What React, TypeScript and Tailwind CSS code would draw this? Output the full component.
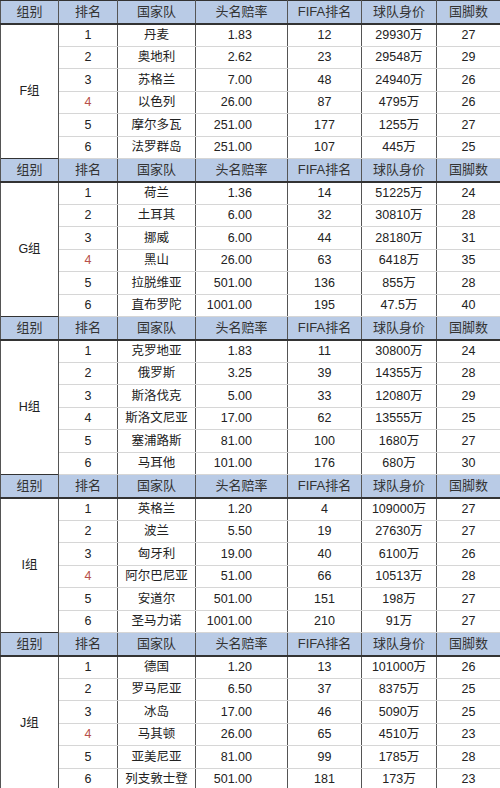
import React from "react";

type Row = [string, string, string, string, string, string];

const GROUPS: { name: string; redFour: boolean; rows: Row[] }[] = [
  {
    name: "F组",
    redFour: true,
    rows: [
      ["1", "丹麦", "1.83", "12", "29930万", "27"],
      ["2", "奥地利", "2.62", "23", "29548万", "29"],
      ["3", "苏格兰", "7.00", "48", "24940万", "26"],
      ["4", "以色列", "26.00", "87", "4795万", "26"],
      ["5", "摩尔多瓦", "251.00", "177", "1255万", "27"],
      ["6", "法罗群岛", "251.00", "107", "445万", "25"],
    ],
  },
  {
    name: "G组",
    redFour: true,
    rows: [
      ["1", "荷兰", "1.36", "14", "51225万", "24"],
      ["2", "土耳其", "6.00", "32", "30810万", "28"],
      ["3", "挪威", "6.00", "44", "28180万", "31"],
      ["4", "黑山", "26.00", "63", "6418万", "35"],
      ["5", "拉脱维亚", "501.00", "136", "855万", "28"],
      ["6", "直布罗陀", "1001.00", "195", "47.5万", "40"],
    ],
  },
  {
    name: "H组",
    redFour: false,
    rows: [
      ["1", "克罗地亚", "1.83", "11", "30800万", "24"],
      ["2", "俄罗斯", "3.25", "39", "14355万", "28"],
      ["3", "斯洛伐克", "5.00", "33", "12080万", "29"],
      ["4", "斯洛文尼亚", "17.00", "62", "13555万", "25"],
      ["5", "塞浦路斯", "81.00", "100", "1680万", "27"],
      ["6", "马耳他", "101.00", "176", "680万", "30"],
    ],
  },
  {
    name: "I组",
    redFour: true,
    rows: [
      ["1", "英格兰", "1.20", "4", "109000万", "27"],
      ["2", "波兰", "5.50", "19", "27630万", "27"],
      ["3", "匈牙利", "19.00", "40", "6100万", "26"],
      ["4", "阿尔巴尼亚", "51.00", "66", "10513万", "28"],
      ["5", "安道尔", "501.00", "151", "198万", "27"],
      ["6", "圣马力诺", "1001.00", "210", "91万", "27"],
    ],
  },
  {
    name: "J组",
    redFour: true,
    rows: [
      ["1", "德国", "1.20", "13", "101000万", "26"],
      ["2", "罗马尼亚", "6.50", "37", "8375万", "25"],
      ["3", "冰岛", "17.00", "46", "5090万", "25"],
      ["4", "马其顿", "26.00", "65", "4510万", "23"],
      ["5", "亚美尼亚", "81.00", "99", "1785万", "28"],
      ["6", "列支敦士登", "501.00", "181", "173万", "23"],
    ],
  },
];

const HEADERS = ["组别", "排名", "国家队", "头名赔率", "FIFA排名", "球队身价", "国脚数"];
const WIDTHS = [58, 59, 78, 92, 74, 75, 64];

const cell =
  "border-x border-x-[#555] border-b border-b-[#d6d6d6] p-0 leading-none";

export default function App() {
  return (
    <div
      className="w-[500px] h-[788px] overflow-hidden bg-white text-[#222]"
      style={{ fontFamily: '"Liberation Sans", "Noto Sans CJK SC", sans-serif' }}
    >
      <table className="w-[500px] table-fixed border-collapse text-[12.5px]">
        <colgroup>
          {WIDTHS.map((w, i) => (
            <col key={i} style={{ width: w }} />
          ))}
        </colgroup>
        <tbody>
          {GROUPS.map((g) => (
            <React.Fragment key={g.name}>
              <tr className="h-[23px] bg-[#b9cbe6]">
                {HEADERS.map((h) => (
                  <td
                    key={h}
                    className="border-x border-x-[#555] border-t border-t-[#333] border-b-2 border-b-[#333] p-0 text-center text-[13px] leading-none text-[#333]"
                  >
                    {h}
                  </td>
                ))}
              </tr>
              {g.rows.map((r, i) => (
                <tr key={i} className="h-[22.5px]">
                  {i === 0 && (
                    <td
                      rowSpan={6}
                      className="border-x border-[#555] p-0 text-center align-middle"
                    >
                      {g.name}
                    </td>
                  )}
                  <td
                    className={`${cell} text-center ${
                      r[0] === "4" && g.redFour ? "text-[#b8504a]" : ""
                    }`}
                  >
                    {r[0]}
                  </td>
                  <td className={`${cell} text-center`}>{r[1]}</td>
                  <td className={`${cell} pr-[35px] text-right`}>{r[2]}</td>
                  <td className={`${cell} text-center`}>{r[3]}</td>
                  <td className={`${cell} text-center`}>{r[4]}</td>
                  <td className={`${cell} text-center`}>{r[5]}</td>
                </tr>
              ))}
            </React.Fragment>
          ))}
        </tbody>
      </table>
    </div>
  );
}
